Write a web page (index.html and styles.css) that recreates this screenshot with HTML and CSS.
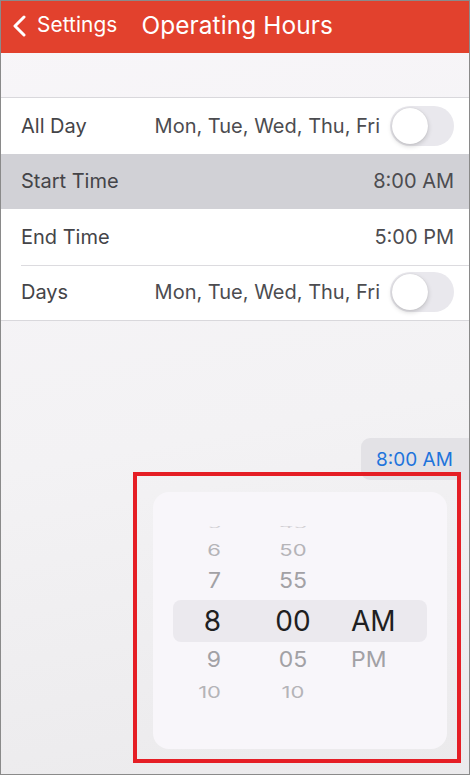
FILE: index.html
```html
<!DOCTYPE html>
<html>
<head>
<meta charset="utf-8">
<link rel="stylesheet" href="styles.css">
</head>
<body>
<div class="frame">
  <header class="nav">
    <div class="back">
      <svg class="chev" width="16" height="22" viewBox="0 0 16 22"><path d="M12 2 L3 11 L12 20" fill="none" stroke="#fff" stroke-width="3" stroke-linecap="round" stroke-linejoin="round"/></svg>
      <span class="back-label">Settings</span>
    </div>
    <h1 class="title">Operating Hours</h1>
  </header>

  <div class="list">
    <div class="row">
      <span class="label">All Day</span>
      <span class="value">Mon, Tue, Wed, Thu, Fri</span>
      <span class="toggle"><span class="knob"></span></span>
    </div>
    <div class="row selected">
      <span class="label">Start Time</span>
      <span class="value">8:00 AM</span>
    </div>
    <div class="row">
      <span class="label">End Time</span>
      <span class="value">5:00 PM</span>
    </div>
    <div class="row inset">
      <span class="label">Days</span>
      <span class="value">Mon, Tue, Wed, Thu, Fri</span>
      <span class="toggle"><span class="knob"></span></span>
    </div>
  </div>

  <div class="pill-wrap">
    <span class="pill">8:00 AM</span>
  </div>

  <div class="highlight">
    <div class="card">
      <div class="wheel">
        <div class="wrow r5"><span class="h">5</span><span class="m">45</span><span class="p"></span></div>
        <div class="wrow r6"><span class="h">6</span><span class="m">50</span><span class="p"></span></div>
        <div class="wrow r7"><span class="h">7</span><span class="m">55</span><span class="p"></span></div>
        <div class="wrow r8"><span class="h">8</span><span class="m">00</span><span class="p">AM</span></div>
        <div class="wrow r9"><span class="h">9</span><span class="m">05</span><span class="p">PM</span></div>
        <div class="wrow r10"><span class="h">10</span><span class="m">10</span><span class="p"></span></div>
        <div class="wrow r11"><span class="h">11</span><span class="m">15</span><span class="p"></span></div>
      </div>
    </div>
  </div>
</div>
</body>
</html>
```

FILE: styles.css
```css
* { box-sizing: border-box; }
html, body { margin: 0; padding: 0; background: #fff; }
body { font-family: Inter, "Noto Sans", sans-serif; }

.frame {
  width: 470px;
  height: 775px;
  border: 1px solid #8a8a8a;
  overflow: hidden;
  display: flex;
  flex-direction: column;
  background: linear-gradient(170deg, #f8f6f9 0%, #f3f2f4 55%, #ebeaec 100%);
}

.nav {
  height: 52px;
  flex: none;
  background: #e2412d;
  display: flex;
  align-items: center;
  color: #fff;
  padding: 0 0 5px 11px;
}
.back { display: flex; align-items: center; }
.chev { margin-right: 9px; margin-top: 3px; }
.back-label { font-size: 20.8px; letter-spacing: 0.1px; }
.title {
  margin: 0 0 0 24px;
  font-size: 24.4px;
  font-weight: 400;
  letter-spacing: 0.1px;
}

.list {
  margin-top: 44px;
  background: #fff;
  border-top: 1px solid #d9d8dc;
  border-bottom: 1px solid #d9d8dc;
}
.row {
  height: 55.5px;
  display: flex;
  align-items: center;
  padding: 0 15px 0 20px;
  font-size: 20px;
  position: relative;
}
.row.selected { background: #d1d1d6; }
.row.inset::before {
  content: "";
  position: absolute;
  left: 20px; right: 0; top: 0;
  border-top: 1px solid #dcdbdf;
}
.label { color: #444448; flex: 1; }
.value { color: #4c4c50; }
.toggle {
  width: 64px;
  height: 40px;
  border-radius: 20px;
  background: #e9e8ed;
  margin-left: 10px;
  position: relative;
  flex: none;
}
.knob {
  position: absolute;
  left: 2px; top: 2px;
  width: 36px; height: 36px;
  border-radius: 50%;
  background: #fff;
  box-shadow: 0 2px 5px rgba(0,0,0,0.18), 0 0 1px rgba(0,0,0,0.15);
}

.pill-wrap {
  margin-top: 117px;
  display: flex;
  justify-content: flex-end;
}
.pill {
  height: 42px;
  width: 108px;
  background: #e3e2e6;
  border-radius: 9px 0 0 9px;
  color: #1e74dc;
  font-size: 19px;
  display: flex;
  align-items: center;
  padding-left: 15px;
}

.highlight {
  margin: -8px 8px 0 132px;
  border: 4px solid #e51e25;
  padding: 16px 10px 10px 16px;
  height: 291px;
}
.card {
  height: 257px;
  background: #f8f6fa;
  border-radius: 16px;
  padding: 34px 20px 0 20px;
  position: relative;
}
.card::before {
  content: "";
  position: absolute;
  left: 20px; right: 20px;
  top: 108px;
  height: 42px;
  background: #ebe9ee;
  border-radius: 8px;
}
.wheel {
  position: relative;
  height: 190px;
  overflow: hidden;
}
.wrow {
  display: grid;
  grid-template-columns: 70px 100px 1fr;
  align-items: center;
  overflow: hidden;
}
.wrow span { display: block; line-height: 1; }
.wrow .h { text-align: right; padding-right: 22px; }
.wrow .m { text-align: center; }
.wrow .p { padding-left: 8px; }

.r5 { height: 11px; color: #d2d0d4; font-size: 22px; }
.r5 span { transform: scaleY(0.3); margin-top: -12px; }
.r6 { height: 26px; color: #b5b4b8; font-size: 22px; }
.r6 span { transform: scaleY(0.75); }
.r7 { height: 37px; color: #a2a1a5; font-size: 23px; }
.r7 span { transform: scaleY(0.92); }
.r8 { height: 42px; color: #1f1f22; font-size: 28px; }
.r9 { height: 37px; color: #a2a1a5; font-size: 23px; }
.r9 span { transform: scaleY(0.92); }
.r10 { height: 26px; color: #b5b4b8; font-size: 22px; }
.r10 span { transform: scaleY(0.75); }
.r11 { height: 13px; color: #d2d0d4; font-size: 22px; }
.r11 span { transform: scaleY(0.35); margin-top: 6px; }
```
